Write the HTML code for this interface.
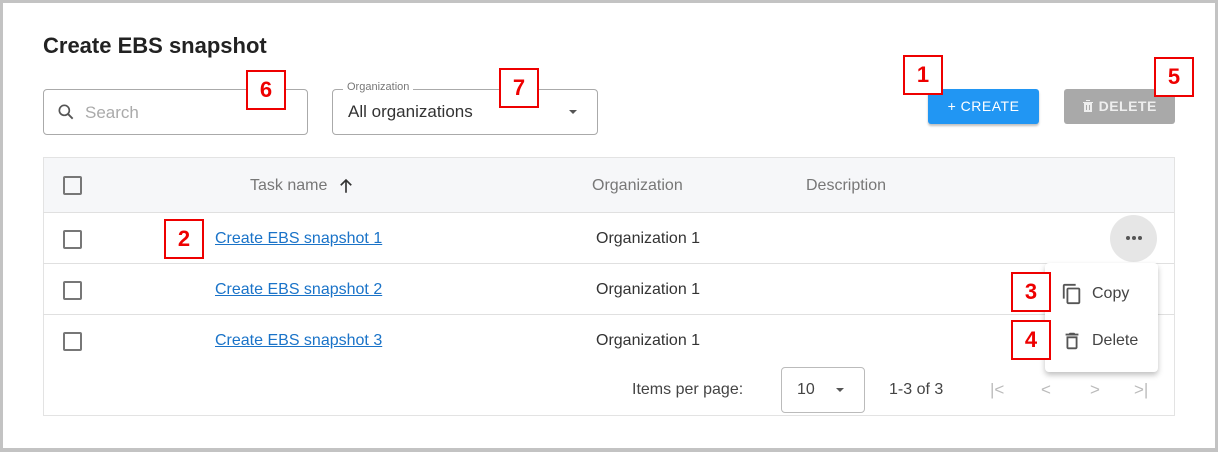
<!DOCTYPE html>
<html><head><style>
body{margin:0;width:1218px;height:452px;overflow:hidden;font-family:"Liberation Sans",sans-serif;background:#fff;position:relative}
.frame{position:absolute;left:0;top:0;width:1212px;height:445px;border:3px solid #c3c3c3;border-bottom-width:4px}
.a{position:absolute}
.red{position:absolute;width:36px;height:36px;border:2px solid #e00;background:#fff;color:#e00;font-weight:bold;font-size:22px;text-align:center;line-height:36px}
.cb{position:absolute;width:15px;height:15px;border:2px solid #777;border-radius:2px}
.row{position:absolute;left:43px;width:1131px;border-top:1px solid #e0e0e0}
.link{position:absolute;color:#1a73c8;text-decoration:underline;font-size:16px}
.org{position:absolute;font-size:16px;color:#333}
.tri{position:absolute;width:0;height:0;border-left:4px solid transparent;border-right:4px solid transparent;border-top:4px solid #555}
</style></head><body>
<div class="frame"></div>
<div class="a" style="left:43px;top:33px;font-size:22px;font-weight:bold;color:#222">Create EBS snapshot</div>
<div class="a" style="left:43px;top:89px;width:263px;height:44px;border:1px solid #aaa;border-radius:4px"></div>
<svg class="a" style="left:56px;top:102px" width="20" height="20" viewBox="0 0 24 24"><circle cx="10" cy="10" r="6" fill="none" stroke="#555" stroke-width="2"/><path d="M14.5 14.5l5.5 5.5" stroke="#555" stroke-width="2.2"/></svg>
<div class="a" style="left:85px;top:103px;font-size:17px;color:#aaa">Search</div>
<div class="a" style="left:332px;top:89px;width:264px;height:44px;border:1px solid #aaa;border-radius:4px"></div>
<div class="a" style="left:343px;top:81px;font-size:11px;color:#777;background:#fff;padding:0 4px">Organization</div>
<div class="a" style="left:348px;top:102px;font-size:17px;color:#333">All organizations</div>
<div class="tri" style="left:569px;top:110px"></div>
<div class="a" style="left:928px;top:89px;width:111px;height:35px;background:#2196f3;border-radius:3px;box-shadow:0 2px 2px rgba(0,0,0,.25);color:#fff;font-size:14px;line-height:35px;text-align:center;letter-spacing:.5px">+ CREATE</div>
<div class="a" style="left:1064px;top:89px;width:111px;height:35px;background:#a9a9a9;border-radius:3px;color:#eee;font-size:14px;font-weight:bold;line-height:35px;text-align:center;letter-spacing:.5px"><svg width="12" height="14" viewBox="0 0 12 14" style="vertical-align:-2px"><path d="M1 3h10v1H10v9H2V4H1zM4 1h4v1H4zM4 6v5h1V6zm3 0v5h1V6z" fill="#eee"/></svg> DELETE</div>
<div class="a" style="left:43px;top:157px;width:1130px;height:257px;border:1px solid #e3e3e3"></div>
<div class="a" style="left:44px;top:158px;width:1130px;height:54px;background:#f6f7f9"></div>
<div class="cb" style="left:63px;top:176px"></div>
<div class="a" style="left:250px;top:177px;font-size:16px;color:#777">Task name</div>
<svg class="a" style="left:337px;top:177px" width="18" height="18" viewBox="0 0 24 24"><path d="M12 21V4M5 11l7-7 7 7" fill="none" stroke="#333" stroke-width="2.2"/></svg>
<div class="a" style="left:592px;top:177px;font-size:16px;color:#777">Organization</div>
<div class="a" style="left:806px;top:177px;font-size:16px;color:#777">Description</div>
<div class="row" style="top:212px"></div>
<div class="row" style="top:263px"></div>
<div class="row" style="top:314px"></div>
<div class="cb" style="left:63px;top:230px"></div>
<div class="cb" style="left:63px;top:281px"></div>
<div class="cb" style="left:63px;top:332px"></div>
<div class="link" style="left:215px;top:230px">Create EBS snapshot 1</div>
<div class="link" style="left:215px;top:281px">Create EBS snapshot 2</div>
<div class="link" style="left:215px;top:332px">Create EBS snapshot 3</div>
<div class="org" style="left:596px;top:230px">Organization 1</div>
<div class="org" style="left:596px;top:281px">Organization 1</div>
<div class="org" style="left:596px;top:332px">Organization 1</div>
<div class="a" style="left:1110px;top:215px;width:47px;height:47px;border-radius:50%;background:#e6e6e6"></div>
<svg class="a" style="left:1124px;top:234px" width="20" height="8"><circle cx="4" cy="4" r="2" fill="#555"/><circle cx="10" cy="4" r="2" fill="#555"/><circle cx="16" cy="4" r="2" fill="#555"/></svg>
<div class="a" style="left:1045px;top:263px;width:113px;height:109px;background:#fff;border-radius:4px;box-shadow:0 3px 6px rgba(0,0,0,.25)"></div>
<svg class="a" style="left:1061px;top:283px" width="22" height="22" viewBox="0 0 24 24"><path d="M16 1H4c-1.1 0-2 .9-2 2v14h2V3h12V1zm3 4H8c-1.1 0-2 .9-2 2v14c0 1.1.9 2 2 2h11c1.1 0 2-.9 2-2V7c0-1.1-.9-2-2-2zm0 16H8V7h11v14z" fill="#555"/></svg>
<div class="a" style="left:1092px;top:285px;font-size:16px;color:#444">Copy</div>
<svg class="a" style="left:1061px;top:330px" width="22" height="22" viewBox="0 0 24 24"><path d="M6 19c0 1.1.9 2 2 2h8c1.1 0 2-.9 2-2V7H6v12zM8 9h8v10H8V9zm7.5-5l-1-1h-5l-1 1H5v2h14V4z" fill="#555"/></svg>
<div class="a" style="left:1092px;top:332px;font-size:16px;color:#444">Delete</div>
<div class="a" style="left:632px;top:381px;font-size:16px;color:#444">Items per page:</div>
<div class="a" style="left:781px;top:367px;width:82px;height:44px;border:1px solid #bbb;border-radius:4px"></div>
<div class="a" style="left:797px;top:381px;font-size:16px;color:#444">10</div>
<div class="tri" style="left:836px;top:388px"></div>
<div class="a" style="left:889px;top:381px;font-size:16px;color:#444">1-3 of 3</div>
<div class="a" style="left:990px;top:380px;font-size:17px;color:#bbb">|&lt;</div>
<div class="a" style="left:1041px;top:380px;font-size:17px;color:#bbb">&lt;</div>
<div class="a" style="left:1090px;top:380px;font-size:17px;color:#bbb">&gt;</div>
<div class="a" style="left:1134px;top:380px;font-size:17px;color:#bbb">&gt;|</div>
<div class="red" style="left:903px;top:55px">1</div>
<div class="red" style="left:1154px;top:57px">5</div>
<div class="red" style="left:246px;top:70px">6</div>
<div class="red" style="left:499px;top:68px">7</div>
<div class="red" style="left:164px;top:219px">2</div>
<div class="red" style="left:1011px;top:272px">3</div>
<div class="red" style="left:1011px;top:320px">4</div>
</body></html>
